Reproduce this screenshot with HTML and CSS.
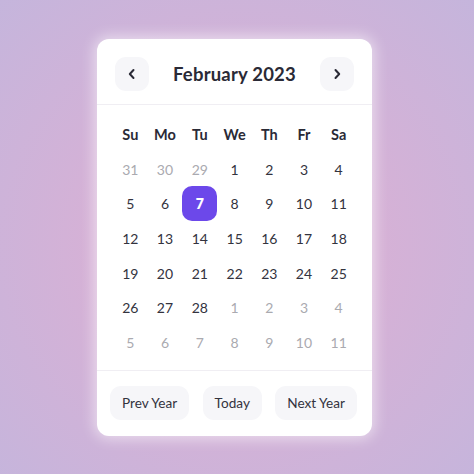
FILE: index.html
```
<!DOCTYPE html>
<html>
<head>
<meta charset="utf-8">
<link rel="stylesheet" href="styles.css">
</head>
<body>
<div class="card">
  <div class="header">
    <button class="nav" aria-label="Previous month">
      <svg width="14" height="14" viewBox="0 0 14 14"><path d="M8.5 3 L4.8 7 L8.5 11" fill="none" stroke="#2a2a36" stroke-width="2" stroke-linecap="round" stroke-linejoin="round"/></svg>
    </button>
    <div class="title">February 2023</div>
    <button class="nav" aria-label="Next month">
      <svg width="14" height="14" viewBox="0 0 14 14"><path d="M5.5 3 L9.2 7 L5.5 11" fill="none" stroke="#2a2a36" stroke-width="2" stroke-linecap="round" stroke-linejoin="round"/></svg>
    </button>
  </div>
  <div class="grid">
    <div class="wd">Su</div><div class="wd">Mo</div><div class="wd">Tu</div><div class="wd">We</div><div class="wd">Th</div><div class="wd">Fr</div><div class="wd">Sa</div>
    <div class="d muted">31</div><div class="d muted">30</div><div class="d muted">29</div><div class="d">1</div><div class="d">2</div><div class="d">3</div><div class="d">4</div>
    <div class="d">5</div><div class="d">6</div><div class="d sel">7</div><div class="d">8</div><div class="d">9</div><div class="d">10</div><div class="d">11</div>
    <div class="d">12</div><div class="d">13</div><div class="d">14</div><div class="d">15</div><div class="d">16</div><div class="d">17</div><div class="d">18</div>
    <div class="d">19</div><div class="d">20</div><div class="d">21</div><div class="d">22</div><div class="d">23</div><div class="d">24</div><div class="d">25</div>
    <div class="d">26</div><div class="d">27</div><div class="d">28</div><div class="d muted">1</div><div class="d muted">2</div><div class="d muted">3</div><div class="d muted">4</div>
    <div class="d muted">5</div><div class="d muted">6</div><div class="d muted">7</div><div class="d muted">8</div><div class="d muted">9</div><div class="d muted">10</div><div class="d muted">11</div>
  </div>
  <div class="footer">
    <button class="btn">Prev Year</button>
    <button class="btn">Today</button>
    <button class="btn">Next Year</button>
  </div>
</div>
</body>
</html>
```
FILE: styles.css
```
html, body {
  margin: 0;
  padding: 0;
  width: 474px;
  height: 474px;
  overflow: hidden;
}
body {
  background: radial-gradient(circle at 50% 52%, #dcaed3 0%, #d6b1d6 40%, #c5b5dc 100%);
  font-family: "Lato", "Noto Sans", sans-serif;
  color: #2a2a36;
  padding: 39px 0 0 97px;
  box-sizing: border-box;
}
.card {
  width: 275px;
  height: 397px;
  box-sizing: border-box;
  background: #fff;
  border-radius: 12px;
  box-shadow: 0 0 14px 3px rgba(255, 255, 255, 0.55);
  display: flex;
  flex-direction: column;
}
.header {
  display: flex;
  align-items: center;
  justify-content: space-between;
  padding: 18px 18px 13px;
  border-bottom: 1px solid #f0eef3;
}
.nav {
  width: 34px;
  height: 34px;
  border: none;
  border-radius: 11px;
  background: #f6f6f9;
  display: flex;
  align-items: center;
  justify-content: center;
  padding: 0;
}
.title {
  font-size: 18.5px;
  font-weight: 700;
  letter-spacing: 0.2px;
}
.grid {
  display: grid;
  grid-template-columns: repeat(7, 1fr);
  padding: 12px 16px 10px;
  border-bottom: 1px solid #f0eef3;
}
.wd, .d {
  height: 34.7px;
  display: flex;
  align-items: center;
  justify-content: center;
  font-size: 14px;
}
.wd {
  font-weight: 700;
  font-size: 14.5px;
}
.d {
  color: #33333e;
}
.d.muted {
  color: #aaaab0;
}
.d.sel {
  background: #6c48ea;
  color: #fff;
  font-weight: 800;
  border-radius: 10px;
  width: 35px;
  justify-self: center;
}
.footer {
  display: flex;
  justify-content: space-between;
  padding: 15px 15px 16px 13px;
}
.btn {
  height: 34px;
  border: none;
  border-radius: 11px;
  background: #f6f6f9;
  font-family: inherit;
  font-size: 13.6px;
  color: #33333e;
  padding: 0 12px;
  white-space: nowrap;
  flex-shrink: 0;
}
```
